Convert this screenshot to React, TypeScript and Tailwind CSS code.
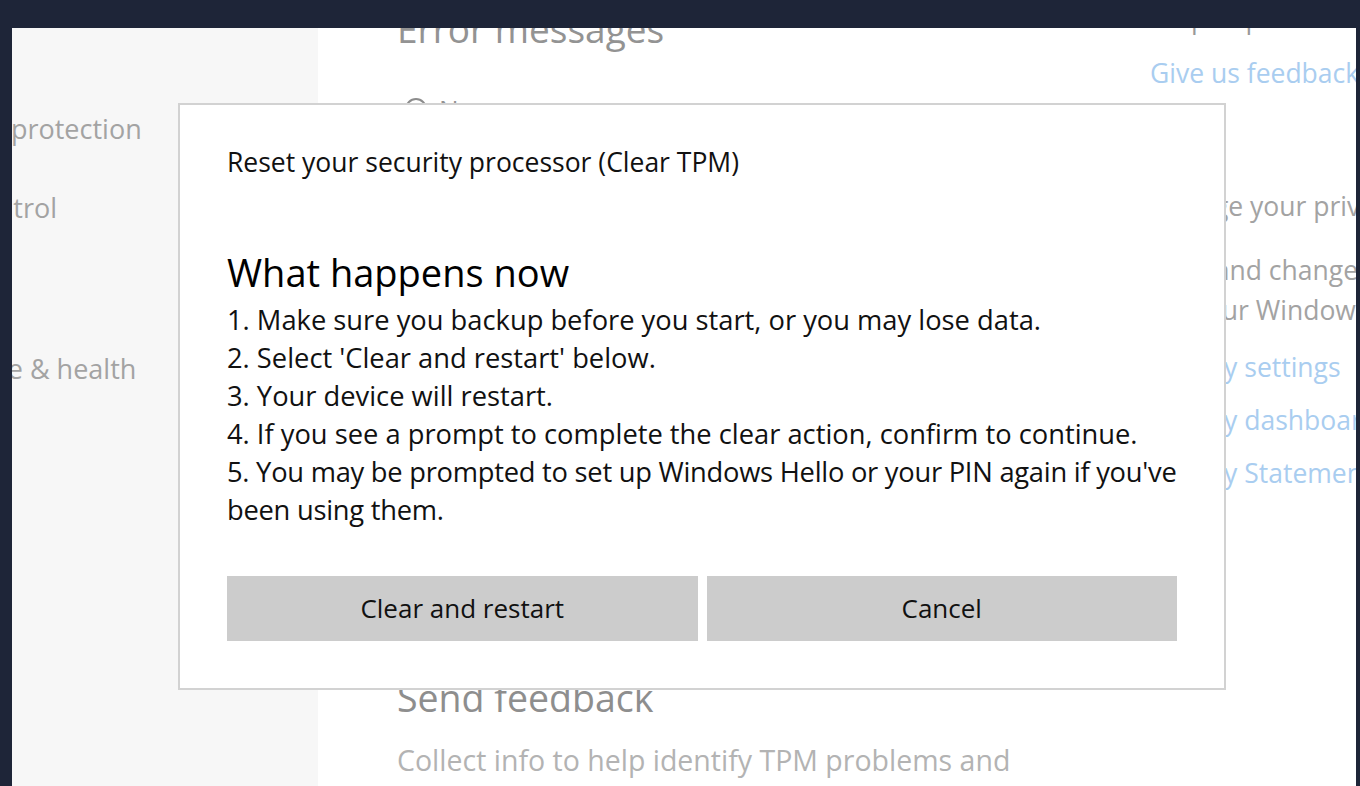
import React from "react";

export default function App() {
  return (
    <div className="w-[1360px] h-[786px] bg-[#1e2538] pl-[12px] pt-[28px] overflow-hidden font-['Open_Sans',sans-serif]">
      <div className="relative w-[1344px] h-[758px] overflow-hidden flex bg-white">
        {/* Left navigation pane */}
        <aside className="w-[306px] shrink-0 bg-[#f7f7f7] text-[27px] leading-[36px] text-[#a3a3a3] flex flex-col">
          <div className="whitespace-nowrap mt-[83px] ml-[-242px]">Firewall &amp; network protection</div>
          <div className="whitespace-nowrap mt-[43px] ml-[-239px]">App &amp; browser control</div>
          <div className="whitespace-nowrap mt-[44px] ml-[-242px]">Device security</div>
          <div className="whitespace-nowrap mt-[45px] ml-[-243px]">Device performance &amp; health</div>
          <div className="whitespace-nowrap mt-[44px] ml-[-242px]">Family options</div>
        </aside>

        {/* Main content */}
        <main className="flex-1 flex">
          <div className="w-[832px] shrink-0 pl-[79px] flex flex-col">
            <div className="text-[37px] leading-[48px] mt-[-23px] whitespace-nowrap text-[#939393]">Error messages</div>
            <div className="mt-[38px] flex items-center gap-[12px] text-[26px] leading-[36px] text-[#939393]">
              <span className="ml-[8px] w-[22px] h-[22px] rounded-full border-2 border-[#8c8c8c]" />
              <span>None</span>
            </div>
            <div className="mt-[14px] flex items-center gap-[12px] text-[26px] leading-[36px] text-[#939393]">
              <span className="ml-[8px] w-[22px] h-[22px] rounded-full border-2 border-[#8c8c8c]" />
              <span>Full</span>
            </div>
            <div className="text-[37.5px] leading-[48px] mt-[497px] whitespace-nowrap text-[#8e8e8e]">Send feedback</div>
            <div className="text-[28.5px] leading-[40px] mt-[18px] whitespace-nowrap text-[#b3b3b3]">Collect info to help identify TPM problems and</div>
          </div>

          {/* Right column */}
          <div className="w-[380px] shrink-0 flex flex-col text-[#a3a3a3] text-[26.5px]">
            <div className="leading-[36px] mt-[-28px] whitespace-nowrap text-[#999999]">Help improve Windows Security</div>
            <div className="leading-[36px] mt-[19px] text-[#a9cdf0] whitespace-nowrap">Give us feedback</div>
            <div className="leading-[36px] mt-[97px] whitespace-nowrap">Change your privacy settings</div>
            <div className="leading-[40px] mt-[26px] whitespace-nowrap">
              View and change privacy settings
              <br />
              for your Windows 10 device.
            </div>
            <div className="leading-[36px] mt-[19px] text-[#a9cdf0] whitespace-nowrap">Privacy settings</div>
            <div className="leading-[36px] mt-[17px] text-[#a9cdf0] whitespace-nowrap">Privacy dashboard</div>
            <div className="leading-[36px] mt-[17px] text-[#a9cdf0] whitespace-nowrap">Privacy Statement</div>
          </div>
        </main>

        {/* Dialog */}
        <div className="absolute left-[166px] top-[75px] w-[1048px] h-[587px] bg-white border-2 border-[#d2d2d2] pt-[42px] px-[47px] flex flex-col text-black">
          <div className="text-[26.5px] leading-[30px] whitespace-nowrap text-[#111111]">Reset your security processor (Clear TPM)</div>
          <div className="text-[38px] leading-[44px] mt-[73px] whitespace-nowrap">What happens now</div>
          <div className="text-[27.3px] leading-[38px] mt-[7px] whitespace-nowrap text-[#111111]">
            <div>1. Make sure you backup before you start, or you may lose data.</div>
            <div>2. Select 'Clear and restart' below.</div>
            <div>3. Your device will restart.</div>
            <div>4. If you see a prompt to complete the clear action, confirm to continue.</div>
            <div className="tracking-[-0.25px]">
              5. You may be prompted to set up Windows Hello or your PIN again if you've
              <br />
              been using them.
            </div>
          </div>
          <div className="mt-[47px] flex gap-[9px]">
            <button className="flex-1 h-[65px] bg-[#cccccc] text-[26px] text-[#111111]">Clear and restart</button>
            <button className="flex-1 h-[65px] bg-[#cccccc] text-[26px] text-[#111111]">Cancel</button>
          </div>
        </div>
      </div>
    </div>
  );
}
